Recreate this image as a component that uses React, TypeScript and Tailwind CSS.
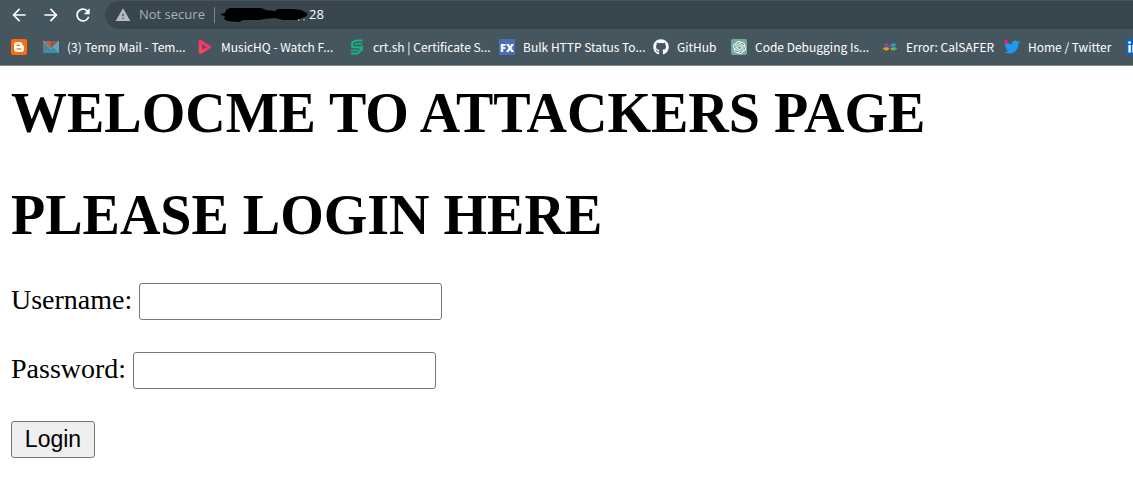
import type { ReactNode } from 'react';
import { FaGithub, FaTwitter } from 'react-icons/fa';
import { MdArrowBack, MdArrowForward, MdRefresh, MdWarning } from 'react-icons/md';
import { SiOpenai } from 'react-icons/si';

function BloggerIcon() {
  return (
    <svg viewBox="0 0 16 16" className="size-4">
      <rect width="16" height="16" rx="2" fill="#ff6a0a" />
      <path d="M6 3h2.600a2.800 2.800 0 0 1 2.800 2.600c0 .8.3 1 .9 1s.8.3.8.8V10a3 3 0 0 1-3 3H6a3 3 0 0 1-3-3V6a3 3 0 0 1 3-3z" fill="#fff" />
      <path d="M6.100 6.200h2.200M6.100 9.900h3.800" stroke="#ff6a0a" strokeWidth="1.400" strokeLinecap="round" />
    </svg>
  );
}

function MailIcon() {
  return (
    <svg viewBox="0 0 16 16" className="size-4">
      <path d="M0 2h16v12H0z" fill="#3e8cae" />
      <path d="M0 2v12l6-6z" fill="#5d7f90" />
      <path d="M16 2v12l-6-6z" fill="#65a3bd" />
      <path d="M1 2h14L8 9.500z" fill="#b0654a" />
      <path d="M8 2h7L8 9.500z" fill="#8e5a4c" />
      <path d="M0 2l8 8 8-8" fill="none" stroke="#87a7b4" strokeWidth=".8" />
    </svg>
  );
}

function MusicIcon() {
  return (
    <svg viewBox="0 0 16 16" className="size-4">
      <path d="M3.300 2.500v11L12.500 8z" fill="none" stroke="#fb3668" strokeWidth="3.200" strokeLinejoin="round" />
      <path d="M3.300 8v5.500L8 10.700" fill="none" stroke="#f4506a" strokeWidth="2" strokeLinejoin="round" />
      <path d="M5.200 5.400v5.200L9.600 8z" fill="#5b4a5f" stroke="#fb3668" strokeWidth=".4" />
    </svg>
  );
}

function CertificateIcon() {
  return (
    <svg viewBox="0 0 16 16" className="size-4" fill="none" stroke="#10b981" strokeLinejoin="round">
      <path d="M13.500 1.500H7L3.200 3.600v4.600h8.300v3.600L8.500 14.500H2" strokeWidth="2" />
      <path d="M13 4.700H7.500L5.800 5.800M12.500 6.500l.8 1v4.500M2.200 11.400h5.600l1.400-.8" strokeWidth="1.500" />
    </svg>
  );
}

function FxIcon() {
  return (
    <span aria-hidden="true" className="flex size-4 items-center justify-center bg-[#4770b8] font-['Open_Sans',sans-serif] text-[11px] leading-none font-extrabold text-white">
      FX
    </span>
  );
}

function ChatIcon() {
  return (
    <span className="flex size-4 items-center justify-center rounded-xs bg-[#74aa9c] text-white">
      <SiOpenai size={13} />
    </span>
  );
}

function SaferIcon() {
  return (
    <svg viewBox="0 0 16 16" className="size-4">
      <path d="M1.500 5.500L4.500 4l3 2.300-.3 1.200-3.200.2z" fill="#8b45a5" />
      <path d="M8.300 6.200L11.500 4l3 1.700-2.500 1.900-3.300.1z" fill="#20a3dd" />
      <path d="M.5 9.400L3.500 8l3.700.8-.2 1.200-2.700 1.900z" fill="#f79420" />
      <path d="M8.300 9L12.500 8l2.800 1.300-3.300 2.500-3.300-1z" fill="#66b84a" />
    </svg>
  );
}

function TwitterIcon() {
  return (
    <span className="relative block size-4">
      <FaTwitter size={16} color="#1d9bf0" />
      <span className="absolute top-px left-0 size-1 rounded-full bg-[#f91880]" />
    </span>
  );
}

function LinkedInIcon() {
  return (
    <svg viewBox="0 0 16 16" className="size-4">
      <rect width="16" height="16" rx="1" fill="#0a66c2" />
      <path d="M2.400 6h2.400v7.600H2.400zM6.300 6h2.300v1c.5-.8 1.300-1.200 2.300-1.200 2.200 0 2.700 1.400 2.700 3.400v4.400h-2.400V9.700c0-1-.1-1.900-1.200-1.900S8.700 8.700 8.700 9.700v3.900H6.300z" fill="#fff" />
      <circle cx="3.600" cy="3.600" r="1.400" fill="#fff" />
    </svg>
  );
}

type Bookmark = { label: string; width: string; icon: ReactNode };

const bookmarks: Bookmark[] = [
  { label: '(3) Temp Mail - Tem...', width: 'w-[114px]', icon: <MailIcon /> },
  { label: 'MusicHQ - Watch F...', width: 'w-[112px]', icon: <MusicIcon /> },
  { label: 'crt.sh | Certificate S...', width: 'w-[110px]', icon: <CertificateIcon /> },
  { label: 'Bulk HTTP Status To...', width: 'w-[114px]', icon: <FxIcon /> },
  { label: 'GitHub', width: 'w-[38px]', icon: <FaGithub size={16} color="#fff" /> },
  { label: 'Code Debugging Is...', width: 'w-[111px]', icon: <ChatIcon /> },
  { label: 'Error: CalSAFER', width: 'w-[82px]', icon: <SaferIcon /> },
  { label: 'Home / Twitter', width: 'w-[82px]', icon: <TwitterIcon /> },
];

const navButton = 'flex h-7 w-8 items-center justify-center';
const field = 'h-[37px] w-[303px] rounded-[3px] border border-[#767676] bg-white px-1 font-["Liberation_Sans",sans-serif] text-[23px]';

export default function App() {
  return (
    <div className="bg-white text-black">
      <header className="overflow-hidden border-b border-[#7d898f] bg-[#46565f] font-['Open_Sans',sans-serif] text-white">
        <nav aria-label="Navigation" className="flex items-center pt-px pl-[3px]">
          <button aria-label="Back" className={navButton}><MdArrowBack size={20} /></button>
          <button aria-label="Forward" className={navButton}><MdArrowForward size={20} /></button>
          <button aria-label="Reload" className={navButton}><MdRefresh size={20} /></button>
          <div className="ml-1.5 flex h-7 flex-1 items-center rounded-l-full bg-[#39464d] pl-2.5 text-[13px]">
            <MdWarning size={16} color="#b4babd" />
            <span className="ml-2 w-[67px] whitespace-nowrap text-[#a9b1b5]">Not secure</span>
            <span className="ml-2 h-4 w-px bg-[#7d878c]" />
            <svg viewBox="0 0 88 16" className="ml-1.5 h-4 w-[88px]" aria-hidden="true">
              <path d="M0 7L4 6 5 3 9 1 40 1 45 3 54 4 57 2 72 2 80 3 86 6 86 9 81 11 76 13 62 13 54 11 44 12 38 13 22 13 18 15 6 14 3 12 4 9 0 8z" fill="#000" />
              <path d="M77 13h1.500M83 12v1.500" stroke="#eee" />
            </svg>
            <span>28</span>
          </div>
        </nav>
        <div className="flex h-9 items-center gap-4 pl-[11px] font-['Noto_Sans_CJK_SC',sans-serif] text-[12px] leading-4">
          <a href="#" aria-label="Blogger" className="shrink-0"><BloggerIcon /></a>
          {bookmarks.map((b) => (
            <a key={b.label} href="#" className="flex shrink-0 items-center gap-2">
              {b.icon}
              <span className={`whitespace-nowrap ${b.width}`}>{b.label}</span>
            </a>
          ))}
          <a href="#" aria-label="LinkedIn" className="shrink-0"><LinkedInIcon /></a>
        </div>
      </header>
      <main className="px-[11px] pt-[15px] pb-11 font-['Liberation_Serif',serif] text-[28px] leading-[34px]">
        <h1 className="text-[56px] leading-16 font-bold">WELOCME TO ATTACKERS PAGE</h1>
        <h1 className="mt-[38px] text-[56px] leading-16 font-bold">PLEASE LOGIN HERE</h1>
        <form className="mt-9 flex flex-col items-start gap-8" onSubmit={(e) => e.preventDefault()}>
          <div className="flex items-start gap-[7px]">
            <label htmlFor="username">Username:</label>
            <input id="username" type="text" className={field} />
          </div>
          <div className="flex items-start gap-[7px]">
            <label htmlFor="password">Password:</label>
            <input id="password" type="password" className={field} />
          </div>
          <button type="submit" className="h-[37px] w-[84px] rounded-[3px] border border-[#767676] bg-[#efefef] pb-0.5 font-['Liberation_Sans',sans-serif] text-[23px] leading-8">
            Login
          </button>
        </form>
      </main>
    </div>
  );
}
